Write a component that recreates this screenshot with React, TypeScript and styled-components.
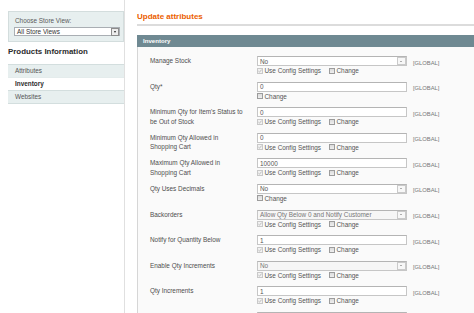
import React from 'react';
import styled, { createGlobalStyle } from 'styled-components';

const Global = createGlobalStyle`
  html, body { margin: 0; padding: 0; background: #fff; overflow: hidden; }
  body { font-family: 'Liberation Sans', Arial, Helvetica, sans-serif; color: #444; }
`;

const Page = styled.div`
  display: flex;
  width: 500px;
  height: 313px;
  align-items: stretch;
`;

const Sidebar = styled.aside`
  width: 116px;
  margin-left: 8px;
  flex-shrink: 0;
  border-right: 1px solid #e0e0e0;
  display: flex;
  flex-direction: column;
`;

const Switcher = styled.div`
  margin-top: 11px;
  background: #e7efef;
  border: 1px solid #d3dddd;
  padding: 3.5px 5px 5px 5px;
`;

const Caption = styled.div`
  font-size: 6.4px;
  line-height: 9px;
  padding-left: 1px;
  color: #5a5a5a;
`;

const StoreSelect = styled.div`
  margin-top: 2.5px;
  width: 106px;
  height: 9px;
  box-sizing: border-box;
  border: 1px solid #a9aeb3;
  background: #fff;
  display: flex;
  align-items: center;
  padding-left: 2px;
  font-size: 6.4px;
  color: #333;
`;

const StoreArrow = styled.span`
  margin-left: auto;
  margin-right: 0.5px;
  width: 6px;
  height: 6px;
  border: 1px solid #8c8c8c;
  background: #ececec;
  display: flex;
  align-items: center;
  justify-content: center;
  &::after {
    content: '';
    border-left: 1.5px solid transparent;
    border-right: 1.5px solid transparent;
    border-top: 2px solid #222;
  }
`;

const SideTitle = styled.h3`
  margin: 5px 0 7px;
  font-size: 7.9px;
  line-height: 10px;
  font-weight: bold;
  color: #2b2b2b;
`;

const Tabs = styled.ul`
  list-style: none;
  margin: 0;
  padding: 0;
  border-bottom: 1px solid #d3dede;
`;

const Tab = styled.li<{ $active?: boolean }>`
  height: 13px;
  box-sizing: border-box;
  border-top: 1px solid ${p => (p.$active ? '#e4ecec' : '#d3dede')};
  background: ${p => (p.$active ? '#fff' : '#e7efef')};
  padding-left: 7px;
  font-size: 6.4px;
  line-height: 12px;
  font-weight: ${p => (p.$active ? 'bold' : 'normal')};
  color: ${p => (p.$active ? '#2b2b2b' : '#555')};
`;

const Main = styled.main`
  flex: 1;
  margin-left: 12px;
  min-width: 0;
`;

const TitleBar = styled.div`
  padding-top: 12px;
  padding-bottom: 2px;
  border-bottom: 2px solid #dcdcdc;
  margin-bottom: 9px;
`;

const Title = styled.h3`
  margin: 0;
  font-size: 8px;
  line-height: 10px;
  font-weight: bold;
  color: #eb5e00;
`;

const Head = styled.div`
  background: #6f8992;
  height: 12px;
  padding-left: 6px;
  color: #fff;
  font-size: 6.1px;
  line-height: 12px;
  font-weight: bold;
`;

const Fieldset = styled.div`
  border: 1px solid #d6d6d6;
  border-top: 0;
  background: #fafafa;
  padding: 6px 0 0 12px;
`;

const Row = styled.div`
  display: grid;
  grid-template-columns: 107px 150px auto;
  padding: 3px 0 3.6px;
`;

const Label = styled.div`
  width: 95px;
  font-size: 6.4px;
  line-height: 9.5px;
  color: #4e4e4e;
`;

const Value = styled.div`
  display: flex;
  flex-direction: column;
`;

const Field = styled.div<{ $disabled?: boolean }>`
  height: 10px;
  box-sizing: border-box;
  border: 1px solid #c6c6c6;
  border-top-color: #b4b4b4;
  background: ${p => (p.$disabled ? '#f6f6f6' : '#fff')};
  display: flex;
  align-items: center;
  padding-left: 2px;
  font-size: 6.4px;
  color: ${p => (p.$disabled ? '#777' : '#555')};
`;

const SelectArrow = styled.span`
  margin-left: auto;
  margin-right: 0.5px;
  width: 7px;
  height: 6px;
  border: 1px solid #cacaca;
  background: #f7f7f7;
  display: flex;
  align-items: center;
  justify-content: center;
  &::after {
    content: '';
    border-left: 1.5px solid transparent;
    border-right: 1.5px solid transparent;
    border-top: 1.5px solid #666;
  }
`;

const CheckLine = styled.div`
  display: flex;
  align-items: center;
  height: 9px;
  font-size: 6.4px;
  color: #555;
  white-space: nowrap;
`;

const Box = styled.span<{ $checked?: boolean }>`
  width: 6px;
  height: 6px;
  box-sizing: border-box;
  border: 1px solid ${p => (p.$checked ? '#c9c9c9' : '#9c9c9c')};
  background: ${p => (p.$checked ? '#f2f2f2' : 'linear-gradient(#dcdcdc, #efefef)')};
  display: inline-flex;
  align-items: center;
  justify-content: center;
  flex-shrink: 0;
`;

const BoxText = styled.span<{ $spaced?: boolean }>`
  margin-left: 1.5px;
  margin-right: ${p => (p.$spaced ? '8px' : '0')};
`;

const Scope = styled.div`
  padding-left: 6px;
  padding-top: 1.5px;
  font-size: 5.8px;
  line-height: 10px;
  color: #777;
`;

type RowData = {
  label: string;
  kind: 'input' | 'select';
  value: string;
  config: boolean;
  partial?: boolean;
};

const rows: RowData[] = [
  { label: 'Manage Stock', kind: 'select', value: 'No', config: true },
  { label: 'Qty*', kind: 'input', value: '0', config: false },
  { label: "Minimum Qty for Item's Status to be Out of Stock", kind: 'input', value: '0', config: true },
  { label: 'Minimum Qty Allowed in Shopping Cart', kind: 'input', value: '0', config: true },
  { label: 'Maximum Qty Allowed in Shopping Cart', kind: 'input', value: '10000', config: true },
  { label: 'Qty Uses Decimals', kind: 'select', value: 'No', config: false },
  { label: 'Backorders', kind: 'select', value: 'Allow Qty Below 0 and Notify Customer', config: true },
  { label: 'Notify for Quantity Below', kind: 'input', value: '1', config: true },
  { label: 'Enable Qty Increments', kind: 'select', value: 'No', config: true },
  { label: 'Qty Increments', kind: 'input', value: '1', config: true },
  { label: '', kind: 'input', value: '', config: true, partial: true },
];

const Check = ({ checked }: { checked?: boolean }) => (
  <Box $checked={checked}>
    {checked && (
      <svg width="4" height="4" viewBox="0 0 4 4">
        <path d="M0.4 2.1 L1.5 3.2 L3.6 0.6" fill="none" stroke="#b0b0b0" strokeWidth="0.8" />
      </svg>
    )}
  </Box>
);

export default function App() {
  return (
    <>
      <Global />
      <Page>
        <Sidebar>
          <Switcher>
            <Caption>Choose Store View:</Caption>
            <StoreSelect>
              All Store Views
              <StoreArrow />
            </StoreSelect>
          </Switcher>
          <SideTitle>Products Information</SideTitle>
          <Tabs>
            <Tab>Attributes</Tab>
            <Tab $active>Inventory</Tab>
            <Tab>Websites</Tab>
          </Tabs>
        </Sidebar>
        <Main>
          <TitleBar>
            <Title>Update attributes</Title>
          </TitleBar>
          <Head>Inventory</Head>
          <Fieldset>
            {rows.map((r, i) => (
              <Row key={i}>
                <Label>{r.label}</Label>
                <Value>
                  <Field $disabled={r.config && r.kind === 'select' && i !== 0}>
                    {r.value}
                    {r.kind === 'select' && <SelectArrow />}
                  </Field>
                  {!r.partial && (
                    <CheckLine>
                      {r.config && (
                        <>
                          <Check checked />
                          <BoxText $spaced>Use Config Settings</BoxText>
                        </>
                      )}
                      <Check />
                      <BoxText>Change</BoxText>
                    </CheckLine>
                  )}
                </Value>
                {!r.partial && <Scope>[GLOBAL]</Scope>}
              </Row>
            ))}
          </Fieldset>
        </Main>
      </Page>
    </>
  );
}
